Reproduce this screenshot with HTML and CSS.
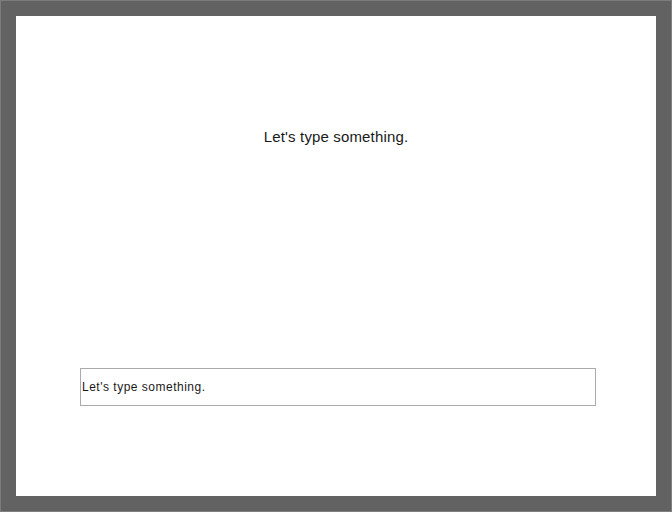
FILE: index.html
```html
<!DOCTYPE html>
<html>
<head>
<meta charset="utf-8">
<link rel="stylesheet" href="styles.css">
</head>
<body>
<div class="frame">
  <div class="screen">
    <div class="title">Let's type something.</div>
    <div class="input-row">
      <div class="input">Let's type something.</div>
    </div>
  </div>
</div>
</body>
</html>
```
FILE: styles.css
```css
html, body {
  margin: 0;
  padding: 0;
  background: #626262;
}
.frame {
  width: 672px;
  height: 512px;
  box-sizing: border-box;
  border: 1px solid #7c7c7c;
  border-right-color: #808080;
  border-bottom-color: #808080;
  padding: 15px;
  background: #626262;
}
.screen {
  width: 640px;
  height: 480px;
  background: #ffffff;
  display: flex;
  flex-direction: column;
  font-family: "Liberation Sans", Arial, sans-serif;
  color: #1a1a1a;
}
.title {
  margin-top: 111px;
  height: 20px;
  line-height: 20px;
  font-size: 15px;
  letter-spacing: 0.15px;
  text-align: center;
}
.input-row {
  margin-top: 221px;
  padding-left: 64px;
}
.input {
  width: 513px;
  height: 36px;
  border: 1px solid #ababab;
  font-size: 12px;
  letter-spacing: 0.5px;
  line-height: 37px;
  padding-left: 1px;
  box-sizing: content-box;
  color: #1a1a1a;
}
```
